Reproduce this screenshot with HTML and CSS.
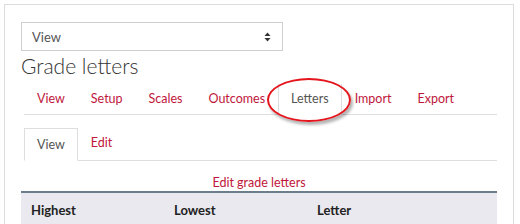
FILE: index.html
```html
<!DOCTYPE html>
<html>
<head>
<meta charset="utf-8">
<link rel="stylesheet" href="styles.css">
</head>
<body>
<div class="frame">
  <div class="select">
    <span class="select-text">View</span>
    <svg class="arrows" width="7" height="10" viewBox="0 0 7 10"><path d="M3.5 0.5 L6.5 4 H0.5 Z M3.5 9.5 L6.5 6 H0.5 Z" fill="#333"/></svg>
  </div>
  <h2 class="title">Grade letters</h2>
  <ul class="tabs tabs-main">
    <li><a>View</a></li>
    <li><a>Setup</a></li>
    <li><a>Scales</a></li>
    <li><a>Outcomes</a></li>
    <li class="active"><a>Letters</a></li>
    <li><a>Import</a></li>
    <li><a>Export</a></li>
  </ul>
  <ul class="tabs tabs-sub">
    <li class="active boxed"><a>View</a></li>
    <li><a>Edit</a></li>
  </ul>
  <div class="edit-link"><a>Edit grade letters</a></div>
  <table class="letters">
    <thead>
      <tr><th class="c1">Highest</th><th class="c2">Lowest</th><th class="c3">Letter</th></tr>
    </thead>
  </table>
  <div class="highlight"></div>
</div>
</body>
</html>
```
FILE: styles.css
```css
html, body {
  margin: 0;
  padding: 0;
  background: #fff;
  font-family: Lato, "Open Sans", sans-serif;
  font-size: 12.5px;
  color: #333;
  overflow: hidden;
  height: 224px;
}
.frame {
  position: relative;
  margin: 4px 0 0 4px;
  width: 476px;
  height: 260px;
  border: 1px solid #dcdcdc;
  border-bottom: none;
  padding: 17px 16px 0 16px;
}
.select {
  border: 1px solid #cfcfcf;
  display: flex;
  align-items: center;
  justify-content: space-between;
  padding: 0 10px 0 10px;
  box-sizing: border-box;
  width: 262px;
  height: 29px;
}
.select-text { color: #555; font-size: 13px; }
.arrows { margin-right: 1px; }
.title {
  margin: 0;
  font-weight: 300;
  font-size: 21px;
  line-height: 30px;
  color: #333;
}
.tabs {
  list-style: none;
  margin: 0 0 0 3px;
  padding: 0;
  display: flex;
  border-bottom: 1px solid #dedede;
}
.tabs li {
  margin-right: 0;
  margin-bottom: -1px;
}
.tabs a {
  display: block;
  padding: 0 12px;
  line-height: 30px;
  height: 30px;
  border: 1px solid transparent;
  border-top: none;
  color: #c0163b;
}
.tabs-main { margin-top: 3px; }
.tabs-main li.active a {
  color: #555;
  border-left-color: #dedede;
  border-right-color: #dedede;
  background: #fff;
  border-bottom: 1px solid #fff;
}
.tabs-sub { margin-top: 13px; }
.tabs-sub li.boxed a {
  color: #555;
  border: 1px solid #dedede;
  border-bottom-color: #fff;
  background: #fff;
  height: 31px;
  line-height: 32px;
}
.edit-link {
  text-align: center;
  margin-top: 14px;
  line-height: 16px;
  height: 16px;
}
.edit-link a { color: #c0163b; }
.letters {
  margin-top: 0;
  border-collapse: collapse;
  width: 476px;
  background: #e9e9ef;
  border-top: 2px solid #6e7d8c;
}
.letters th {
  text-align: left;
  font-weight: bold;
  font-size: 13px;
  padding: 9px 10px;
  line-height: 17px;
  color: #222;
}
.c1 { width: 123px; }
.c2 { width: 123px; }
.highlight {
  position: absolute;
  left: 262px;
  top: 73px;
  width: 80px;
  height: 40px;
  border: 2px solid #e4151c;
  border-radius: 50%;
  box-shadow: 2px 3px 3px rgba(0,0,0,0.3);
}
```
